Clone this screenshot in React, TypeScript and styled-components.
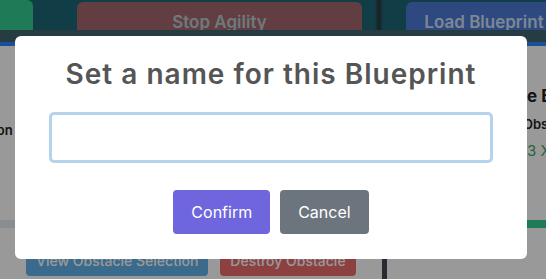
import React, { useState } from 'react';
import styled, { createGlobalStyle } from 'styled-components';

const GlobalStyle = createGlobalStyle`
  html, body {
    margin: 0;
    padding: 0;
    overflow: hidden;
    font-family: Inter, "Noto Sans", sans-serif;
  }
`;

function App() {
  const [name, setName] = useState('');

  return (
    <>
      <GlobalStyle />
      <Page>
        <TopBar>
          <CornerButton />
          <TopButton $bg="#a3676e" $width={285} $gap={44} $text="#b7cbd0">
            Stop Agility
          </TopButton>
          <Stripe />
          <TopButton $bg="#4e78d5" $width={156} $gap={0} $text="#d0e2f4">
            Load Blueprint
          </TopButton>
        </TopBar>
        <SubBand />
        <BlueLine />
        <Content>
          <Columns>
            <LeftPanel>
              <PanelLabel $shift={46}>Selection</PanelLabel>
            </LeftPanel>
            <RightPanel>
              <PanelTitle>Obstacle Blueprint</PanelTitle>
              <PanelLabel $shift={4}>Obstacles</PanelLabel>
              <PanelCount>3 X</PanelCount>
            </RightPanel>
          </Columns>
          <Divider>
            <DividerPart $bg="#e6ebf0" />
            <DividerPart $bg="#34cb91" $width={19} />
          </Divider>
          <BottomBar>
            <BottomButton $bg="#61b1e9">View Obstacle Selection</BottomButton>
            <BottomButton $bg="#e96b6b">Destroy Obstacle</BottomButton>
            <VerticalRule />
          </BottomBar>
        </Content>
      </Page>

      <Overlay>
        <Modal>
          <ModalTitle>Set a name for this Blueprint</ModalTitle>
          <NameInput value={name} onChange={(e) => setName(e.target.value)} />
          <Actions>
            <ActionButton $bg="#6f66dd">Confirm</ActionButton>
            <ActionButton $bg="#6c757d">Cancel</ActionButton>
          </Actions>
        </Modal>
      </Overlay>
    </>
  );
}

const Page = styled.div`
  width: 546px;
  height: 279px;
  background: #fff;
  display: flex;
  flex-direction: column;
  overflow: hidden;
`;

const TopBar = styled.div`
  height: 34px;
  background: #1b6775;
  display: flex;
  align-items: flex-start;
  padding-top: 2px;
  box-sizing: border-box;
  overflow: hidden;
`;

const CornerButton = styled.div`
  flex: 0 0 33px;
  height: 40px;
  margin-top: -2px;
  background: #34cb91;
  border-radius: 0 6px 0 0;
`;

const TopButton = styled.div<{ $bg: string; $width: number; $gap: number; $text: string }>`
  flex: 0 0 ${(p) => p.$width}px;
  height: 40px;
  margin-left: ${(p) => p.$gap}px;
  background: ${(p) => p.$bg};
  border-radius: 6px 6px 0 0;
  display: flex;
  align-items: center;
  justify-content: center;
  color: ${(p) => p.$text};
  font-size: 17px;
  font-weight: 600;
  box-sizing: border-box;
`;

const Stripe = styled.div`
  flex: 0 0 8px;
  height: 34px;
  margin: -2px 23px 0 13px;
  background: linear-gradient(90deg, #1b6775, #2e3a44 40%, #2e3a44 60%, #1b6775);
`;

const SubBand = styled.div`
  height: 14px;
  background: #3f6470;
`;

const BlueLine = styled.div`
  height: 4px;
  background: #3084ff;
`;

const Content = styled.div`
  flex: 1;
  display: flex;
  flex-direction: column;
`;

const Columns = styled.div`
  height: 174px;
  display: flex;
  justify-content: space-between;
`;

const LeftPanel = styled.div`
  width: 15px;
  padding-top: 66px;
  white-space: nowrap;
`;

const RightPanel = styled.div`
  width: 19px;
  padding-top: 40px;
  white-space: nowrap;
`;

const PanelTitle = styled.div`
  font-size: 17px;
  line-height: 20px;
  font-weight: 700;
  color: #222;
  margin-left: -64px;
`;

const PanelLabel = styled.div<{ $shift: number }>`
  font-size: 13px;
  line-height: 16px;
  font-weight: 600;
  color: #222;
  margin-top: 10px;
  margin-left: -${(p) => p.$shift}px;
`;

const PanelCount = styled.div`
  font-size: 15px;
  line-height: 18px;
  color: #33aa66;
  margin-top: 10px;
`;

const Divider = styled.div`
  height: 8px;
  display: flex;
`;

const DividerPart = styled.div<{ $bg: string; $width?: number }>`
  flex: ${(p) => (p.$width ? `0 0 ${p.$width}px` : '1')};
  background: ${(p) => p.$bg};
`;

const BottomBar = styled.div`
  flex: 1;
  display: flex;
  align-items: flex-start;
  gap: 12px;
  padding: 18px 0 0 26px;
`;

const BottomButton = styled.div<{ $bg: string }>`
  height: 30px;
  padding: 0 10px;
  background: ${(p) => p.$bg};
  border-radius: 4px;
  color: #fff;
  font-size: 14px;
  font-weight: 500;
  display: flex;
  align-items: center;
`;

const VerticalRule = styled.div`
  width: 5px;
  height: 40px;
  margin-left: 14px;
  margin-top: -7px;
  background: #434953;
`;

const Overlay = styled.div`
  position: fixed;
  inset: 0;
  background: rgba(0, 0, 0, 0.4);
  padding: 36px 0 0 15px;
  box-sizing: border-box;
`;

const Modal = styled.div`
  width: 512px;
  height: 223px;
  background: #fff;
  border-radius: 6px;
  padding: 22px 34px 25px;
  box-sizing: border-box;
  display: flex;
  flex-direction: column;
  align-items: center;
`;

const ModalTitle = styled.h2`
  margin: 0;
  font-size: 28px;
  line-height: 33px;
  letter-spacing: 1px;
  font-weight: 600;
  color: #555;
`;

const NameInput = styled.input`
  margin-top: 21px;
  width: 100%;
  height: 51px;
  box-sizing: border-box;
  border: 3px solid #b5d3ec;
  border-radius: 5px;
  outline: none;
  font-family: inherit;
  font-size: 16px;
  padding: 0 12px;
`;

const Actions = styled.div`
  margin-top: 27px;
  display: flex;
  gap: 10px;
`;

const ActionButton = styled.button<{ $bg: string }>`
  height: 44px;
  padding: 0 18px;
  border: none;
  border-radius: 4px;
  background: ${(p) => p.$bg};
  color: #fff;
  font-family: inherit;
  font-size: 16px;
  cursor: pointer;
`;

export default App;
